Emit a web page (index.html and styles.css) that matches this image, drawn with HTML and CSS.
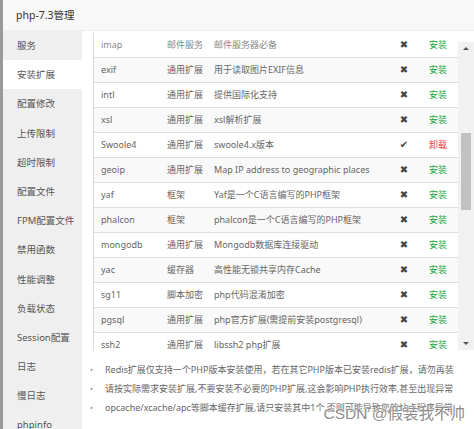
FILE: index.html
```html
<!DOCTYPE html>
<html lang="zh-CN">
<head>
<meta charset="utf-8">
<title>php-7.3管理</title>
<link rel="stylesheet" href="styles.css">
</head>
<body>
<div class="win">
  <div class="titlebar">php-7.3管理</div>
  <div class="main">
    <nav class="side">
      <div class="item">服务</div>
      <div class="item active">安装扩展</div>
      <div class="item">配置修改</div>
      <div class="item">上传限制</div>
      <div class="item">超时限制</div>
      <div class="item">配置文件</div>
      <div class="item">FPM配置文件</div>
      <div class="item">禁用函数</div>
      <div class="item">性能调整</div>
      <div class="item">负载状态</div>
      <div class="item">Session配置</div>
      <div class="item">日志</div>
      <div class="item">慢日志</div>
      <div class="item">phpinfo</div>
    </nav>
    <section class="content">
      <div class="tablebox">
        <div class="tablewrap">
          <div class="row faint"><span class="c1">imap</span><span class="c2">邮件服务</span><span class="c3">邮件服务器必备</span><span class="c4">✖</span><span class="c5 inst">安装</span></div>
          <div class="row"><span class="c1">exif</span><span class="c2">通用扩展</span><span class="c3">用于读取图片EXIF信息</span><span class="c4">✖</span><span class="c5 inst">安装</span></div>
          <div class="row"><span class="c1">intl</span><span class="c2">通用扩展</span><span class="c3">提供国际化支持</span><span class="c4">✖</span><span class="c5 inst">安装</span></div>
          <div class="row"><span class="c1">xsl</span><span class="c2">通用扩展</span><span class="c3">xsl解析扩展</span><span class="c4">✖</span><span class="c5 inst">安装</span></div>
          <div class="row"><span class="c1">Swoole4</span><span class="c2">通用扩展</span><span class="c3">swoole4.x版本</span><span class="c4">✔</span><span class="c5 uninst">卸载</span></div>
          <div class="row"><span class="c1">geoip</span><span class="c2">通用扩展</span><span class="c3">Map IP address to geographic places</span><span class="c4">✖</span><span class="c5 inst">安装</span></div>
          <div class="row"><span class="c1">yaf</span><span class="c2">框架</span><span class="c3">Yaf是一个C语言编写的PHP框架</span><span class="c4">✖</span><span class="c5 inst">安装</span></div>
          <div class="row"><span class="c1">phalcon</span><span class="c2">框架</span><span class="c3">phalcon是一个C语言编写的PHP框架</span><span class="c4">✖</span><span class="c5 inst">安装</span></div>
          <div class="row"><span class="c1">mongodb</span><span class="c2">通用扩展</span><span class="c3">Mongodb数据库连接驱动</span><span class="c4">✖</span><span class="c5 inst">安装</span></div>
          <div class="row"><span class="c1">yac</span><span class="c2">缓存器</span><span class="c3">高性能无锁共享内存Cache</span><span class="c4">✖</span><span class="c5 inst">安装</span></div>
          <div class="row"><span class="c1">sg11</span><span class="c2">脚本加密</span><span class="c3">php代码混淆加密</span><span class="c4">✖</span><span class="c5 inst">安装</span></div>
          <div class="row"><span class="c1">pgsql</span><span class="c2">通用扩展</span><span class="c3">php官方扩展(需提前安装postgresql)</span><span class="c4">✖</span><span class="c5 inst">安装</span></div>
          <div class="row"><span class="c1">ssh2</span><span class="c2">通用扩展</span><span class="c3">libssh2 php扩展</span><span class="c4">✖</span><span class="c5 inst">安装</span></div>
        </div>
        <div class="scrollbar">
          <span class="arrow up"></span>
          <span class="thumb"></span>
          <span class="fill"></span>
          <span class="arrow down"></span>
        </div>
      </div>
      <ul class="notes">
        <li>Redis扩展仅支持一个PHP版本安装使用，若在其它PHP版本已安装redis扩展，请勿再装</li>
        <li>请按实际需求安装扩展,不要安装不必要的PHP扩展,这会影响PHP执行效率,甚至出现异常</li>
        <li>opcache/xcache/apc等脚本缓存扩展,请只安装其中1个,否则可能导致您的站点程序异常</li>
      </ul>
    </section>
  </div>
  <div class="watermark">CSDN @假装我不帅</div>
</div>
</body>
</html>
```

FILE: styles.css
```css
html, body {
  margin: 0;
  padding: 0;
  background: #fff;
}
body {
  font-family: "Noto Sans", "Noto Sans CJK SC", sans-serif;
  color: #666;
}
.win {
  position: relative;
  width: 474px;
  height: 429px;
  box-sizing: border-box;
  border-left: 3px solid #9a9a9a;
  overflow: hidden;
  background: #fff;
}
.titlebar {
  height: 30px;
  line-height: 30px;
  border-bottom: 1px solid #eee;
  background: #f8f8f8;
  padding-left: 13px;
  font-size: 10.5px;
  color: #333;
}
.main {
  display: flex;
  height: 398px;
}
.side {
  width: 79px;
  flex: none;
  background: #efefef;
}
.side .item {
  height: 29.2px;
  line-height: 29.2px;
  padding-left: 14px;
  font-size: 9.5px;
  color: #555;
  white-space: nowrap;
}
.side .item.active {
  background: #fff;
}
.content {
  flex: 1;
  padding: 2px 0 0 11px;
  min-width: 0;
}
.tablebox {
  display: flex;
  height: 317px;
}
.tablewrap {
  width: 365px;
  height: 317px;
  overflow: hidden;
  border-left: 1px solid #ddd;
  box-sizing: border-box;
}
.row {
  display: grid;
  grid-template-columns: 66px 47px 181px 32px 38px;
  height: 24px;
  line-height: 24px;
  border-bottom: 1px solid #ddd;
  font-size: 9px;
  color: #666;
  white-space: nowrap;
}
.row:nth-child(even) {
  background: #f9f9f9;
}
.row span {
  overflow: hidden;
}
.c1, .c2, .c3 {
  padding-left: 7px;
}
.c4 {
  text-align: center;
  font-family: "DejaVu Sans", sans-serif;
  font-size: 10px;
  color: #444;
}
.c5 {
  padding-left: 9px;
}
.inst {
  color: #20a53a;
}
.uninst {
  color: #ef3b3b;
}
.faint {
  color: #888;
}
.scrollbar {
  width: 16px;
  height: 308px;
  margin-top: 9px;
  background: #f1f1f1;
  display: flex;
  flex-direction: column;
  align-items: center;
}
.arrow {
  width: 0;
  height: 0;
  border-left: 3px solid transparent;
  border-right: 3px solid transparent;
}
.arrow.up {
  margin-top: 5px;
  border-bottom: 3px solid #555;
}
.arrow.down {
  margin-bottom: 5px;
  border-top: 3px solid #555;
}
.thumb {
  margin-top: 83px;
  width: 10px;
  height: 77px;
  background: #c1c1c1;
}
.fill {
  flex: 1;
}
.notes {
  list-style: none;
  margin: 10px 0 0 -3px;
  padding: 0;
  font-size: 9px;
  color: #666;
}
.notes li {
  height: 19px;
  line-height: 19px;
  white-space: nowrap;
}
.notes li::before {
  content: "•";
  display: inline-block;
  width: 15px;
  color: #999;
  font-size: 8px;
}
.watermark {
  position: absolute;
  right: 9px;
  bottom: 6px;
  font-family: "Liberation Sans", "Noto Sans CJK SC", sans-serif;
  font-size: 15.5px;
  color: rgba(120, 120, 120, 0.85);
  text-shadow: 0 0 2px #fff, 0 0 1px #fff;
  white-space: nowrap;
}
```
